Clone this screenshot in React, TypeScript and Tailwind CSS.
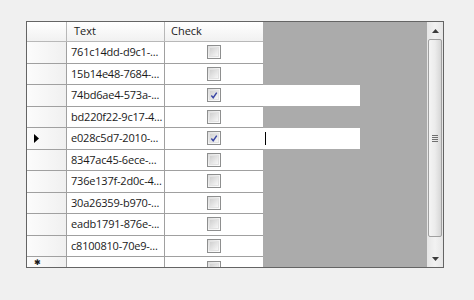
const rows = [
  { id: '761c14dd-d9c1-...', checked: false },
  { id: '15b14e48-7684-...', checked: false },
  { id: '74bd6ae4-573a-...', checked: true, editor: true },
  { id: 'bd220f22-9c17-4...', checked: false },
  { id: 'e028c5d7-2010-...', checked: true, editor: true, current: true },
  { id: '8347ac45-6ece-...', checked: false },
  { id: '736e137f-2d0c-4...', checked: false },
  { id: '30a26359-b970-...', checked: false },
  { id: 'eadb1791-876e-...', checked: false },
  { id: 'c8100810-70e9-...', checked: false },
]

function CheckBox({ checked }: { checked: boolean }) {
  return (
    <div className="flex h-[14px] w-[14px] items-center justify-center border border-[#8e8f8f] bg-gradient-to-br from-[#dcdcdc] via-[#f4f4f4] to-[#fdfdfd] p-[1px]">
      <div className="flex h-full w-full items-center justify-center border border-[#e2e2e2] bg-gradient-to-br from-[#d0d0d0] to-[#f7f7f7]">
        {checked && (
          <svg width="9" height="9" viewBox="0 0 9 9">
            <path d="M1.5 4.5 L3.6 7 L7.6 1.2" fill="none" stroke="#3a46a4" strokeWidth="1.6" />
          </svg>
        )}
      </div>
    </div>
  )
}

function ScrollBar() {
  return (
    <div className="flex w-[16px] flex-col bg-gradient-to-r from-[#e6e6e6] via-[#f2f2f2] to-[#e6e6e6]">
      <div className="flex h-[17px] items-center justify-center">
        <svg width="7" height="4" viewBox="0 0 7 4">
          <path d="M0 4 L3.5 0 L7 4 Z" fill="#3c3c3c" />
        </svg>
      </div>
      <div className="mx-[1px] flex h-[198px] items-center justify-center rounded-[2px] border border-[#a0a0a0] bg-gradient-to-r from-[#f4f4f4] via-[#ececec] to-[#d6d6d6]">
        <div className="flex flex-col gap-[1px]">
          <div className="h-[1px] w-[6px] bg-[#707070]" />
          <div className="h-[1px] w-[6px] bg-[#707070]" />
          <div className="h-[1px] w-[6px] bg-[#707070]" />
          <div className="h-[1px] w-[6px] bg-[#707070]" />
        </div>
      </div>
      <div className="flex-1" />
      <div className="flex h-[17px] items-center justify-center">
        <svg width="7" height="4" viewBox="0 0 7 4">
          <path d="M0 0 L3.5 4 L7 0 Z" fill="#3c3c3c" />
        </svg>
      </div>
    </div>
  )
}

export default function App() {
  return (
    <div
      className="h-[300px] w-[474px] overflow-hidden bg-[#f0f0f0] pl-[26px] pt-[21px] text-[11px] text-[#1a1a1a]"
      style={{ fontFamily: '"Segoe UI", "Open Sans", "Liberation Sans", sans-serif' }}
    >
      <div className="flex h-[247px] w-[418px] border border-[#646464] bg-[#ababab]">
        <div className="flex flex-1 flex-col overflow-hidden">
          <div className="flex h-[20px] shrink-0">
            <div className="w-[40px] border-b border-r border-[#b8b8b8] bg-gradient-to-b from-white to-[#f1f1f1]" />
            <div className="flex w-[98px] items-center border-b border-r border-[#b8b8b8] bg-gradient-to-b from-white to-[#f1f1f1] pl-[7px]">
              Text
            </div>
            <div className="flex w-[98px] items-center border-b border-[#b8b8b8] bg-gradient-to-b from-white to-[#f1f1f1] pl-[6px]">
              Check
            </div>
          </div>
          {rows.map((r) => (
            <div key={r.id} className="flex h-[21.5px] shrink-0">
              <div className="flex w-[40px] items-center border-b border-r border-[#a0a0a0] bg-gradient-to-r from-[#fcfcfc] to-[#f0f0f0] pl-[7px]">
                {r.current && (
                  <svg width="5" height="9" viewBox="0 0 5 9">
                    <path d="M0 0 L5 4.5 L0 9 Z" fill="#000" />
                  </svg>
                )}
              </div>
              <div className="flex w-[98px] items-center overflow-hidden border-b border-r border-[#a0a0a0] bg-white pl-[4px] tracking-[-0.2px] whitespace-nowrap">
                {r.id}
              </div>
              <div className="flex w-[98px] items-center justify-center border-b border-[#a0a0a0] bg-white pr-[1px]">
                <CheckBox checked={r.checked} />
              </div>
              {r.editor && (
                <div className="mb-[1px] flex w-[97px] items-center bg-white pl-[2px]">
                  {r.current && <div className="h-[13px] w-[1px] bg-black" />}
                </div>
              )}
            </div>
          ))}
          <div className="flex flex-1">
            <div className="relative w-[40px] border-r border-[#a0a0a0] bg-gradient-to-r from-[#fcfcfc] to-[#f0f0f0]">
              <span className="absolute left-[7px] top-[1px] text-[8px] leading-none">✱</span>
            </div>
            <div className="w-[98px] border-r border-[#a0a0a0] bg-white" />
            <div className="flex w-[98px] justify-center bg-white pt-[4px]">
              <CheckBox checked={false} />
            </div>
          </div>
        </div>
        <ScrollBar />
      </div>
    </div>
  )
}
